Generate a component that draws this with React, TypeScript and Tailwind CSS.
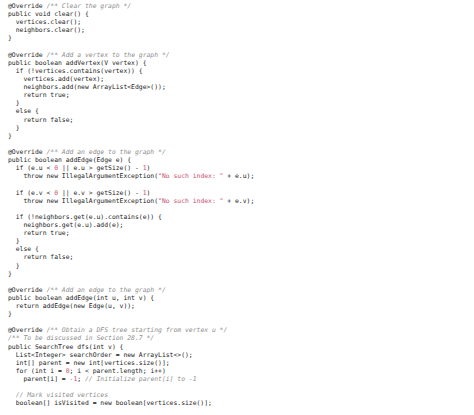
import React from "react";

const code = `@Override /** Clear the graph */
public void clear() {
  vertices.clear();
  neighbors.clear();
}

@Override /** Add a vertex to the graph */
public boolean addVertex(V vertex) {
  if (!vertices.contains(vertex)) {
    vertices.add(vertex);
    neighbors.add(new ArrayList<Edge>());
    return true;
  }
  else {
    return false;
  }
}

@Override /** Add an edge to the graph */
public boolean addEdge(Edge e) {
  if (e.u < 0 || e.u > getSize() - 1)
    throw new IllegalArgumentException("No such index: " + e.u);

  if (e.v < 0 || e.v > getSize() - 1)
    throw new IllegalArgumentException("No such index: " + e.v);

  if (!neighbors.get(e.u).contains(e)) {
    neighbors.get(e.u).add(e);
    return true;
  }
  else {
    return false;
  }
}

@Override /** Add an edge to the graph */
public boolean addEdge(int u, int v) {
  return addEdge(new Edge(u, v));
}

@Override /** Obtain a DFS tree starting from vertex u */
/** To be discussed in Section 28.7 */
public SearchTree dfs(int v) {
  List<Integer> searchOrder = new ArrayList<>();
  int[] parent = new int[vertices.size()];
  for (int i = 0; i < parent.length; i++)
    parent[i] = -1; // Initialize parent[i] to -1

  // Mark visited vertices
  boolean[] isVisited = new boolean[vertices.size()];`;

type Tok = { t: string; k: "p" | "c" | "s" | "n" };

function tokenize(line: string): Tok[] {
  const re = /(\/\*.*?\*\/|\/\/.*$|"[^"]*"|-?\b\d+\b)/g;
  const out: Tok[] = [];
  let last = 0;
  let m: RegExpExecArray | null;
  while ((m = re.exec(line))) {
    if (m.index > last) out.push({ t: line.slice(last, m.index), k: "p" });
    const s = m[0];
    const k = s.startsWith("/") ? "c" : s.startsWith('"') ? "s" : "n";
    out.push({ t: s, k });
    last = m.index + s.length;
  }
  if (last < line.length) out.push({ t: line.slice(last), k: "p" });
  return out;
}

const cls: Record<Tok["k"], string> = {
  p: "text-[#222222]",
  c: "text-[#8c8c8c] italic",
  s: "text-[#c8506e]",
  n: "text-[#c8506e]",
};

export default function App() {
  const lines = code.split("\n");
  return (
    <div className="w-[474px] h-[415px] bg-white overflow-hidden pt-[2px] pl-[8px] font-['DejaVu_Sans_Mono',monospace] text-[6.4px] leading-[8.12px]">
      {lines.map((l, i) => (
        <div key={i} className="h-[8.12px] whitespace-pre">
          {tokenize(l).map((t, j) => (
            <span key={j} className={cls[t.k]}>
              {t.t}
            </span>
          ))}
        </div>
      ))}
    </div>
  );
}
